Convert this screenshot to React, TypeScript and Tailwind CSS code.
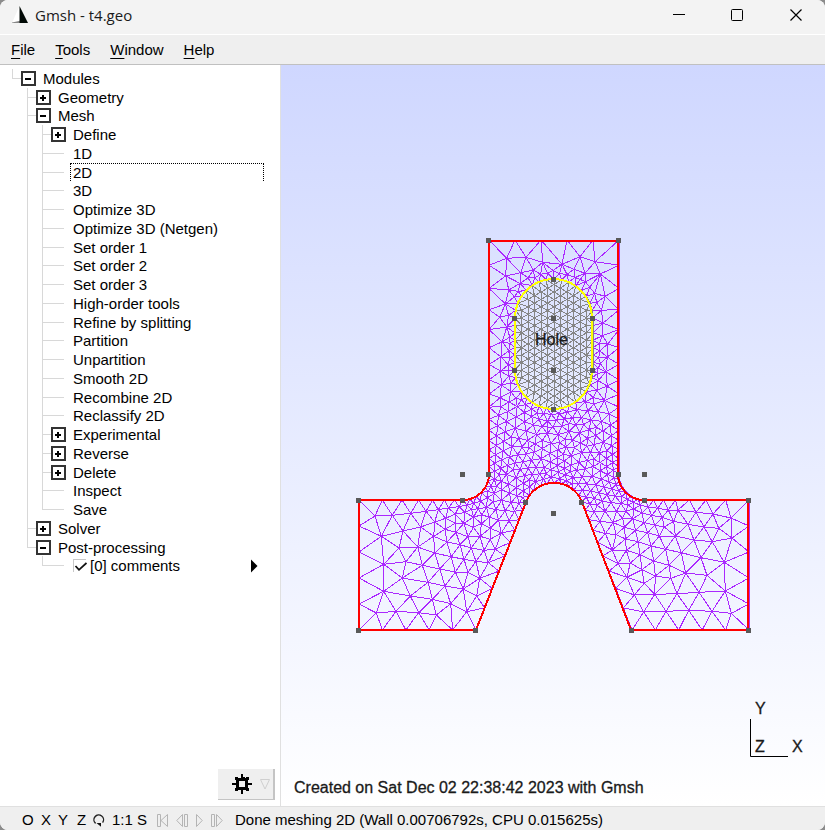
import React from "react";

type Pt = { x: number; y: number };
type Tri = [number, number, number];

/* ---------- geometry of the model (canvas units) ---------- */

const CX = 273;
const lerp = (a: Pt, b: Pt, t: number): Pt => ({ x: a.x + (b.x - a.x) * t, y: a.y + (b.y - a.y) * t });
const dist = (a: Pt, b: Pt) => Math.hypot(a.x - b.x, a.y - b.y);
const arc = (c: Pt, r: number, a0: number, a1: number, n: number): Pt[] =>
  Array.from({ length: n + 1 }, (_, i) => {
    const a = ((a0 + ((a1 - a0) * i) / n) * Math.PI) / 180;
    return { x: c.x + r * Math.cos(a), y: c.y + r * Math.sin(a) };
  });

/* splits a segment with a characteristic length that varies linearly from ha to hb */
function graded(a: Pt, b: Pt, ha: number, hb: number): Pt[] {
  const len = dist(a, b);
  const k = Math.log(hb / ha);
  const flat = Math.abs(k) < 0.01;
  const total = flat ? len / ha : (len / (hb - ha)) * k;
  const n = Math.round(total);
  return Array.from({ length: n + 1 }, (_, i) => {
    const u = i / n;
    return lerp(a, b, flat ? u : (Math.exp(k * u) - 1) / (Math.exp(k) - 1));
  });
}

const mirror = (p: Pt): Pt => ({ x: 2 * CX - p.x, y: p.y });

const topRight = { x: 338, y: 175 };
const neckRight = { x: 338, y: 409 };
const shoulder = { x: 364, y: 435 };
const legTop = { x: 468, y: 435 };
const legBottom = { x: 468, y: 565 };
const legInner = { x: 351, y: 565 };
const crotch = { x: 301, y: 437 };

const rightSide: Pt[] = [
  ...graded(topRight, neckRight, 26, 7),
  ...arc({ x: 364, y: 409 }, 26, 180, 90, 6),
  ...graded(shoulder, legTop, 8, 26),
  ...graded(legTop, legBottom, 26, 26),
  ...graded(legBottom, legInner, 23, 23),
  ...graded(legInner, crotch, 24, 8),
];
const crotchArc = arc({ x: CX, y: 448 }, 30, -22, -158, 10);
const topEdge = graded(mirror(topRight), topRight, 26, 26);

function unique(points: Pt[]): Pt[] {
  const out: Pt[] = [];
  for (const p of points) if (!out.some((q) => dist(p, q) < 1.5)) out.push(p);
  return out;
}

const outline = unique([...topEdge, ...rightSide, ...crotchArc, ...rightSide.map(mirror).reverse()]);
const hole = unique([
  ...arc({ x: CX, y: 253 }, 39, 180, 360, 16),
  ...graded({ x: CX + 39, y: 253 }, { x: CX + 39, y: 305 }, 7, 7),
  ...arc({ x: CX, y: 305 }, 39, 0, 180, 16),
  ...graded({ x: CX - 39, y: 305 }, { x: CX - 39, y: 253 }, 7, 7),
]);

function inside(p: Pt, poly: Pt[]): boolean {
  let r = false;
  for (let i = 0, j = poly.length - 1; i < poly.length; j = i++) {
    const a = poly[i];
    const b = poly[j];
    if (a.y > p.y !== b.y > p.y && p.x < ((b.x - a.x) * (p.y - a.y)) / (b.y - a.y) + a.x) r = !r;
  }
  return r;
}

/* ---------- Delaunay triangulation (Bowyer-Watson) ---------- */

function delaunay(src: Pt[]): Tri[] {
  const pts = src.map((p, i) => ({
    x: p.x + Math.sin(i * 12.9) * 0.001,
    y: p.y + Math.cos(i * 78.2) * 0.001,
  }));
  const n = pts.length;
  pts.push({ x: -5000, y: -5000 }, { x: 6000, y: -5000 }, { x: 300, y: 8000 });
  type Cell = { v: Tri; x: number; y: number; r: number };
  const cell = (a: number, b: number, c: number): Cell => {
    const A = pts[a], B = pts[b], C = pts[c];
    const bx = B.x - A.x, by = B.y - A.y, cx = C.x - A.x, cy = C.y - A.y;
    const d = 2 * (bx * cy - by * cx) || 1e-12;
    const ux = (cy * (bx * bx + by * by) - by * (cx * cx + cy * cy)) / d;
    const uy = (bx * (cx * cx + cy * cy) - cx * (bx * bx + by * by)) / d;
    return { v: [a, b, c], x: A.x + ux, y: A.y + uy, r: ux * ux + uy * uy };
  };
  let cells = [cell(n, n + 1, n + 2)];
  for (let i = 0; i < n; i++) {
    const p = pts[i];
    const edges = new Map<string, [number, number]>();
    const keep: Cell[] = [];
    for (const t of cells) {
      if ((p.x - t.x) ** 2 + (p.y - t.y) ** 2 < t.r) {
        for (let k = 0; k < 3; k++) {
          const a = t.v[k], b = t.v[(k + 1) % 3];
          const key = a < b ? a + "_" + b : b + "_" + a;
          if (edges.has(key)) edges.delete(key);
          else edges.set(key, [a, b]);
        }
      } else keep.push(t);
    }
    edges.forEach(([a, b]) => keep.push(cell(a, b, i)));
    cells = keep;
  }
  return cells.filter((t) => t.v.every((v) => v < n)).map((t) => t.v);
}

function wire(pts: Pt[], keep: (c: Pt) => boolean): string {
  const seen = new Set<string>();
  let d = "";
  for (const t of delaunay(pts)) {
    const c = {
      x: (pts[t[0]].x + pts[t[1]].x + pts[t[2]].x) / 3,
      y: (pts[t[0]].y + pts[t[1]].y + pts[t[2]].y) / 3,
    };
    if (!keep(c)) continue;
    for (let k = 0; k < 3; k++) {
      const a = Math.min(t[k], t[(k + 1) % 3]);
      const b = Math.max(t[k], t[(k + 1) % 3]);
      const key = a + "_" + b;
      if (seen.has(key)) continue;
      seen.add(key);
      d += `M${pts[a].x.toFixed(1)} ${pts[a].y.toFixed(1)}L${pts[b].x.toFixed(1)} ${pts[b].y.toFixed(1)}`;
    }
  }
  return d;
}

/* ---------- interior nodes of the coarse regions, in thirds of a unit ---------- */

const leftNodes = [
  75, 168, 127, 166, 182, 160, 228, 154, 265, 149, 295, 144, 94, 229, 159, 213, 212, 201, 254, 186, 287, 175, 316, 162,
  101, 313, 147, 264, 203, 261, 251, 229, 285, 208, 316, 190, 291, 246, 318, 217, 101, 394, 157, 354, 168, 305, 217, 316,
  254, 279, 303, 290, 330, 254, 354, 230, 79, 459, 138, 454, 181, 408, 234, 367, 269, 327, 206, 458, 247, 418, 285, 378,
  316, 336, 342, 298, 364, 264, 259, 465, 302, 431, 340, 387, 354, 337, 378, 304, 402, 271, 350, 455, 380, 408, 389, 355,
  415, 308, 436, 268,
];
const rightNodes = [
  543, 174, 489, 162, 438, 157, 384, 150, 355, 150, 323, 145, 546, 234, 506, 205, 462, 201, 414, 193, 371, 184, 337, 172,
  487, 245, 432, 240, 376, 228, 328, 228, 343, 201, 293, 218, 523, 307, 453, 293, 394, 278, 347, 268, 303, 258, 264, 245,
  471, 346, 407, 339, 357, 316, 311, 303, 270, 284, 229, 271, 526, 393, 447, 397, 381, 401, 363, 355, 316, 348, 276, 329,
  241, 309, 204, 311, 544, 460, 486, 454, 416, 451, 348, 454, 281, 456, 314, 403, 253, 405, 231, 352, 283, 370, 187, 270,
];
const topNodes = [
  110, 100, 168, 97, 218, 112, 276, 118, 330, 95, 375, 110, 391, 147, 107, 153, 152, 143, 190, 135, 312, 133, 345, 145,
];
const unpack = (list: number[], ox: number, oy: number): Pt[] =>
  Array.from({ length: list.length / 2 }, (_, i) => ({ x: ox + list[2 * i] / 3, y: oy + list[2 * i + 1] / 3 }));

/* ---------- plate mesh: nodes advance from the contours inwards ---------- */

function plateMesh(): string {
  const spacing = (loop: Pt[]) =>
    loop.map((p, i) => {
      const a = loop[(i + 1) % loop.length];
      const b = loop[(i + loop.length - 1) % loop.length];
      return { p, h: (dist(p, a) + dist(p, b)) / 2 };
    });
  const sources = [...spacing(outline), ...spacing(hole)];
  const size = (p: Pt) => {
    let w = 0;
    let s = 0;
    for (const q of sources) {
      const k = q.h / (dist(p, q.p) ** 3 + 1);
      w += k;
      s += k * q.h;
    }
    return s / w;
  };
  const fixed = [
    ...outline,
    ...hole,
    ...unpack(leftNodes, 69, 395),
    ...unpack(rightNodes, 269, 395),
    ...unpack(topNodes, 189, 160),
  ];
  const domain = (p: Pt) => inside(p, outline) && !inside(p, hole);
  const pts = [...fixed];
  for (let i = 0; i < pts.length && pts.length < 2500; i++) {
    const h0 = size(pts[i]);
    for (let k = 0; k < 12; k++) {
      const a = (k * Math.PI) / 6 + i * 0.37;
      const c = { x: pts[i].x + h0 * 0.86 * Math.cos(a), y: pts[i].y + h0 * 0.86 * Math.sin(a) };
      if (!domain(c)) continue;
      const h = size(c) * 0.76;
      if (pts.every((q) => dist(q, c) > h)) pts.push(c);
    }
  }
  for (let pass = 0; pass < 5; pass++) {
    const acc = pts.map(() => ({ x: 0, y: 0, n: 0 }));
    for (const t of delaunay(pts))
      for (let k = 0; k < 3; k++) {
        const a = acc[t[k]];
        const q = pts[t[(k + 1) % 3]];
        a.x += q.x;
        a.y += q.y;
        a.n++;
      }
    for (let i = fixed.length; i < pts.length; i++)
      if (acc[i].n) pts[i] = { x: acc[i].x / acc[i].n, y: acc[i].y / acc[i].n };
  }
  return wire(pts, domain);
}

function holeMesh(): string {
  const pts = [...hole];
  const step = 52 / 7;
  for (let c = -5; c <= 5; c++)
    for (let r = -16; r <= 16; r++) {
      const p = { x: CX + c * 6.5, y: 279 + (r + (c % 2 ? 0.5 : 0)) * step };
      if (inside(p, hole) && hole.every((q) => dist(p, q) > 4.6)) pts.push(p);
    }
  return wire(pts, (c) => inside(c, hole));
}

const PLATE = plateMesh();
const HOLE = holeMesh();

const markers: [number, number][] = [
  [208, 175], [338, 175], [273, 214], [234, 253], [273, 253], [312, 253], [234, 305], [273, 305], [312, 305], [273, 344],
  [182, 409], [208, 409], [338, 409], [364, 409], [78, 435], [182, 435], [245, 437], [301, 437], [364, 435], [468, 435],
  [273, 448], [78, 565], [195, 565], [351, 565], [468, 565],
];

function Scene() {
  return (
    <svg className="block h-[741px] w-[544px]" viewBox="0 0 544 741" role="img" aria-label="Mesh view">
      <g fill="none" shapeRendering="crispEdges">
        <path d={PLATE} stroke="#aa28ff" />
        <path d={HOLE} stroke="#858585" />
        <path
          d="M234 253A38.5 39 0 0 1 311 253V305A38.5 39 0 0 1 234 305Z"
          stroke="#ffff00"
          strokeWidth="2"
        />
        <path
          d="M208 176H337V409A26 26 0 0 0 363 435H467V565H350L301 437A30 30 0 0 0 245 437L195 565H78V435H182A26 26 0 0 0 208 409Z"
          stroke="#ff0000"
          strokeWidth="2"
        />
      </g>
      <g fill="#595959" shapeRendering="crispEdges">
        {markers.map(([x, y]) => (
          <rect key={x + "-" + y} x={x - 3} y={y - 2} width="5" height="5" />
        ))}
      </g>
      <path d="M469.5 654V691.5H507" fill="none" stroke="#000" />
      <g className="font-['Liberation_Sans',Arial,sans-serif] text-[16px]" fill="#1a1a1a" stroke="#1a1a1a" strokeWidth="0.3">
        <text x="254" y="280">Hole</text>
        <text x="13" y="728">Created on Sat Dec 02 22:38:42 2023 with Gmsh</text>
        <text x="474" y="649">Y</text>
        <text x="474" y="687">Z</text>
        <text x="511" y="687">X</text>
      </g>
    </svg>
  );
}

/* ---------- module tree ---------- */

type Node = { label: string; depth: number; open?: boolean; last?: boolean; check?: boolean; focus?: boolean };

const leaf = (label: string, extra: Partial<Node> = {}): Node => ({ label, depth: 2, ...extra });

const tree: Node[] = [
  { label: "Modules", depth: 0, open: true, last: true },
  { label: "Geometry", depth: 1, open: false },
  { label: "Mesh", depth: 1, open: true },
  leaf("Define", { open: false }),
  leaf("1D"),
  leaf("2D", { focus: true }),
  leaf("3D"),
  leaf("Optimize 3D"),
  leaf("Optimize 3D (Netgen)"),
  leaf("Set order 1"),
  leaf("Set order 2"),
  leaf("Set order 3"),
  leaf("High-order tools"),
  leaf("Refine by splitting"),
  leaf("Partition"),
  leaf("Unpartition"),
  leaf("Smooth 2D"),
  leaf("Recombine 2D"),
  leaf("Reclassify 2D"),
  leaf("Experimental", { open: false }),
  leaf("Reverse", { open: false }),
  leaf("Delete", { open: false }),
  leaf("Inspect"),
  leaf("Save", { last: true }),
  { label: "Solver", depth: 1, open: false },
  { label: "Post-processing", depth: 1, open: true, last: true },
  leaf("[0] comments", { last: true, check: true }),
];

function TreeRow({ node }: { node: Node }) {
  const branch = node.open !== undefined;
  return (
    <li className="flex h-[19px] items-stretch pl-3 nth-[4n+2]:h-[18px]">
      {node.depth > 0 && <span className="w-[15px] shrink-0" />}
      {node.depth > 1 && (
        <span className={"w-[15px] shrink-0 " + (node.check ? "" : "border-l border-[#d8d8d8]")} />
      )}
      <span className={"flex shrink-0 flex-col " + (branch ? "w-[9px]" : "mr-[6px] w-[22px]")}>
        <span className="flex-1 border-b border-l border-[#d8d8d8]" />
        <span className={"flex-1 " + (node.last ? "" : "border-l border-[#d8d8d8]")} />
      </span>
      {branch && (
        <button
          aria-label={(node.open ? "Collapse " : "Expand ") + node.label}
          className="mr-1 grid size-[15px] shrink-0 place-items-center self-center border-2 border-[#333] bg-white"
        >
          <svg width="7" height="7" viewBox="0 0 7 7" shapeRendering="crispEdges">
            <path d={node.open ? "M0 3H6V5H0Z" : "M0 3H2V1H4V3H6V5H4V7H2V5H0Z"} />
          </svg>
        </button>
      )}
      {node.check ? (
        <label className="flex flex-1 items-center pl-[3px]">
          <span className="grid size-[13px] place-items-center border-t border-l border-[#c8c8c8]">
            <input
              type="checkbox"
              defaultChecked
              className="peer col-start-1 row-start-1 size-3 appearance-none"
            />
            <svg className="pointer-events-none col-start-1 row-start-1 hidden peer-checked:block" width="13" height="12" viewBox="0 0 13 12">
              <path d="M1.5 6L5 9.8L12.5 3" fill="none" stroke="#111" strokeWidth="1.8" />
            </svg>
          </span>
          <span className="ml-1 flex-1">{node.label}</span>
          <svg className="mr-[22px]" width="7" height="14" viewBox="0 0 7 14">
            <path d="M0 0.5L6.5 7L0 13.5Z" />
          </svg>
        </label>
      ) : (
        <button
          className={
            "mr-4 flex flex-1 items-center border-t border-r border-l border-dotted pl-[2px] text-left " +
            (node.focus ? "border-black" : "border-transparent")
          }
        >
          {node.label}
        </button>
      )}
    </li>
  );
}

/* ---------- window ---------- */

function TitleBar() {
  return (
    <header className="flex h-[34px] items-center bg-[#f3f3f3] pb-1 pl-3">
      <svg className="mr-[6px]" width="17" height="18" viewBox="0 0 17 18">
        <path d="M7.5 0L0 17H8Z" fill="#fff" />
        <path d="M0 16.5L8 14.8V17H0Z" fill="#888" />
        <path d="M7.5 0L16 17H7.5Z" fill="#020a06" />
      </svg>
      <h1 className="flex-1 font-['Open_Sans','Noto_Sans',sans-serif] text-[15px] text-[#1a1a1a]">Gmsh - t4.geo</h1>
      <div className="flex items-center">
        <button aria-label="Minimize" className="grid w-[58px] place-items-center">
          <svg width="12" height="12" shapeRendering="crispEdges"><path d="M0 5H12V6H0Z" /></svg>
        </button>
        <button aria-label="Maximize" className="grid w-[58px] place-items-center">
          <svg width="12" height="12"><rect x="0.5" y="0.5" width="11" height="11" rx="1" fill="none" stroke="#000" /></svg>
        </button>
        <button aria-label="Close" className="grid w-[59px] place-items-center">
          <svg width="12" height="12"><path d="M0.5 0.5L11.5 11.5M11.5 0.5L0.5 11.5" stroke="#000" strokeWidth="1.2" /></svg>
        </button>
      </div>
    </header>
  );
}

const menus = ["File", "Tools", "Window", "Help"];

function MenuBar() {
  return (
    <nav className="flex h-[31px] items-center gap-5 border-t border-b border-t-white border-b-[#c0c0c0] bg-[#efefef] pl-[11px]">
      {menus.map((m) => (
        <button key={m}>
          <span className="underline underline-offset-3">{m[0]}</span>
          {m.slice(1)}
        </button>
      ))}
    </nav>
  );
}

function StatusBar() {
  return (
    <footer className="flex h-6 items-center border-t border-[#e0e0e0] bg-[#efefef] pt-[3px] pl-[22px]">
      <div className="flex items-center">
        <button className="w-[19px] text-left">O</button>
        <button className="w-[17px] text-left">X</button>
        <button className="w-[19px] text-left">Y</button>
        <button className="w-4 text-left">Z</button>
        <button aria-label="Rotate" className="w-[19px]">
          <svg width="12" height="13" viewBox="0 0 12 13">
            <path d="M2.6 9.4A4.8 4.8 0 1 1 9.6 8.6" fill="none" stroke="#222" strokeWidth="1.4" />
            <path d="M3.5 9H8V12.8Z" fill="#111" />
          </svg>
        </button>
        <button className="w-[25px] text-left">1:1</button>
        <button className="w-5 text-left">S</button>
      </div>
      <div className="flex items-center gap-2 text-[#b4b4b4]">
        <button aria-label="Rewind" disabled>
          <svg width="11" height="13" viewBox="0 0 11 13" fill="none" stroke="currentColor">
            <path d="M0.5 0.5H3.5V12.5H0.5ZM10.5 0.5V12.5L4 6.5Z" />
          </svg>
        </button>
        <button aria-label="Step back" disabled>
          <svg width="12" height="13" viewBox="0 0 12 13" fill="none" stroke="currentColor">
            <path d="M6.5 0.5V12.5L0.8 6.5ZM8.5 0.5H11.5V12.5H8.5Z" />
          </svg>
        </button>
        <button aria-label="Play" disabled>
          <svg width="7" height="13" viewBox="0 0 7 13" fill="none" stroke="currentColor">
            <path d="M0.5 0.5V12.5L6.2 6.5Z" />
          </svg>
        </button>
        <button aria-label="Step forward" disabled>
          <svg width="12" height="13" viewBox="0 0 12 13" fill="none" stroke="currentColor">
            <path d="M0.5 0.5H3.5V12.5H0.5ZM5.5 0.5V12.5L11.2 6.5Z" />
          </svg>
        </button>
      </div>
      <p className="ml-3 whitespace-nowrap">Done meshing 2D (Wall 0.00706792s, CPU 0.015625s)</p>
    </footer>
  );
}

export default function App() {
  return (
    <div className="bg-[#8c8c8c]">
      <div className="flex min-h-screen flex-col overflow-hidden rounded-lg bg-white font-['Liberation_Sans',Arial,sans-serif] text-[15px] leading-[18px] text-black">
        <TitleBar />
        <MenuBar />
        <main className="flex flex-1">
          <aside className="flex w-[281px] shrink-0 flex-col justify-between border-r border-[#e0e0e0]">
            <ul className="pt-1">
              {tree.map((n) => (
                <TreeRow key={n.label} node={n} />
              ))}
            </ul>
            <button
              aria-label="Options"
              className="mr-[5px] mb-[6px] flex h-[31px] w-[57px] items-center gap-2 self-end border-r-2 border-b border-[#c4c4c4] bg-[#efefef] pl-[14px]"
            >
              <svg width="20" height="20" viewBox="0 0 20 20" shapeRendering="crispEdges">
                <path
                  fillRule="evenodd"
                  d="M9 0H11V3H13V4H14V3H17V6H16V9H20V11H16V14H17V17H14V16H11V20H9V16H6V17H3V14H4V11H0V9H4V6H3V3H6V4H9ZM7 7V13H13V7Z"
                />
              </svg>
              <svg width="10" height="11" viewBox="0 0 10 11">
                <path d="M0.5 0.5H9.5L5 10Z" fill="none" stroke="#cfcfcf" />
              </svg>
            </button>
          </aside>
          <section className="flex-1 overflow-hidden bg-linear-to-b from-[#cfd7ff] to-white">
            <Scene />
          </section>
        </main>
        <StatusBar />
      </div>
    </div>
  );
}
